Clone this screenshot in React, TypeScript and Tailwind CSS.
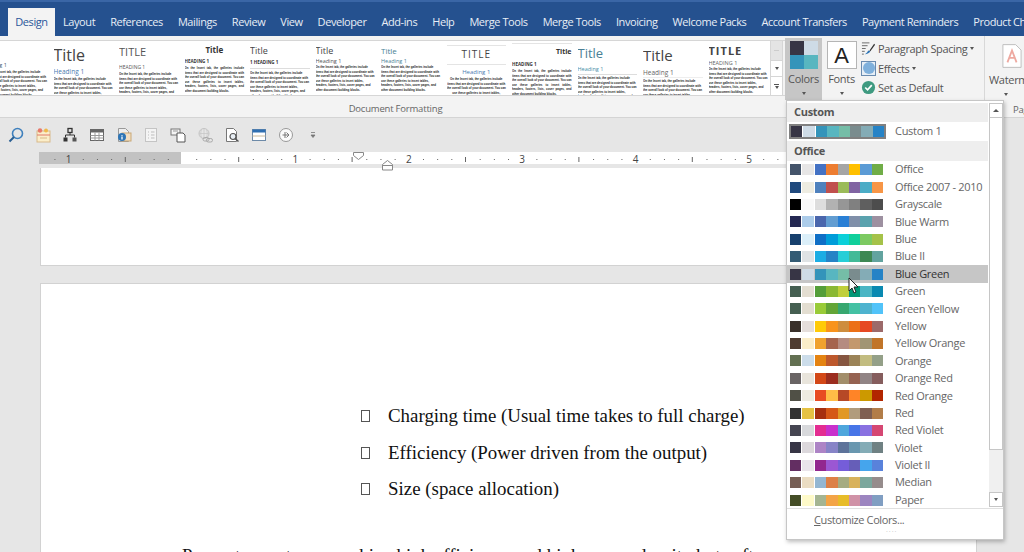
const tabs = ["Layout", "References", "Mailings", "Review", "View", "Developer", "Add-ins", "Help", "Merge Tools", "Merge Tools", "Invoicing", "Welcome Packs", "Account Transfers", "Payment Reminders", "Product Change"];

const bodyText =
  "On the Insert tab, the galleries include items that are designed to coordinate with the overall look of your document. You can use these galleries to insert tables, headers, footers, lists, cover pages, and other document building blocks.";

const gallery = [
  { title: "", titleCls: "h-[19px]", heading: "Heading 1", headCls: "-ml-[7px] text-[5.5px] text-[#44546a]", bodyCls: "mt-[1px]" },
  { title: "Title", titleCls: "text-[16px] leading-[24px] text-[#444]", heading: "Heading 1", headCls: "mt-[1px] text-[6.5px] text-[#4a7ab0]", bodyCls: "mt-[2px]" },
  { title: "TITLE", titleCls: "text-[11px] leading-[18px] text-[#555]", heading: "HEADING 1", headCls: "mt-[3px] text-[5px] text-[#555]", bodyCls: "mt-[1px]" },
  { title: "Title", titleCls: "text-[8px] leading-[14px] font-bold text-center text-[#333]", heading: "HEADING 1", headCls: "mt-[1px] text-[4.5px] font-bold text-[#333]", bodyCls: "mt-[1px] text-justify" },
  { title: "Title", titleCls: "text-[9px] leading-[15px] text-[#444]", heading: "1   HEADING 1", headCls: "mt-[1px] pb-[2px] text-[4.5px] font-bold text-[#333] border-b border-[#ddd]", bodyCls: "mt-[2px]" },
  { title: "Title", titleCls: "text-[9px] leading-[15px] text-[#444]", heading: "Heading 1", headCls: "text-[5.5px] text-[#555]", bodyCls: "mt-[0px]" },
  { title: "Title", titleCls: "text-[8px] leading-[15px] text-[#4a7f95]", heading: "Heading 1", headCls: "text-[5.5px] text-[#4a7f95]", bodyCls: "mt-[0px]" },
  { title: "TITLE", titleCls: "mt-[2px] pb-[2px] text-[10px] leading-[16px] tracking-[1px] text-center text-[#444] border-t border-b border-[#e4e4e4]", heading: "Heading 1", headCls: "mt-[4px] text-[6px] text-center text-[#4a7ab0]", bodyCls: "mt-[1px] text-center" },
  { title: "Title", titleCls: "text-[7px] leading-[16px] font-bold text-right text-[#333] border-t border-[#e4e4e4]", heading: "HEADING 1", headCls: "mt-[1px] text-[4.5px] font-bold text-[#333]", bodyCls: "mt-[1px] text-justify" },
  { title: "Title", titleCls: "text-[13px] leading-[20px] text-[#4a7f95]", heading: "Heading 1", headCls: "mt-[3px] pb-[1px] text-[5.5px] text-[#4a8fa8] border-b border-[#ddd]", bodyCls: "mt-[1px]" },
  { title: "Title", titleCls: "text-[15px] leading-[24px] text-[#444]", heading: "Heading 1", headCls: "mt-[2px] pb-[1px] text-[6.5px] text-[#666] border-b border-[#eee]", bodyCls: "mt-[1px]" },
  { title: "TITLE", titleCls: "text-[11px] leading-[16px] tracking-[1px] font-bold text-[#444]", heading: "HEADING 1", headCls: "mt-[1px] text-[5.5px] text-[#666]", bodyCls: "mt-[0px]" },
];

const colorRows = [
  { name: "Office", c: ["bg-[#44546a]", "bg-[#e7e6e6]", "bg-[#4472c4]", "bg-[#ed7d31]", "bg-[#a5a5a5]", "bg-[#ffc000]", "bg-[#5b9bd5]", "bg-[#70ad47]"] },
  { name: "Office 2007 - 2010", c: ["bg-[#1f497d]", "bg-[#eeece1]", "bg-[#4f81bd]", "bg-[#c0504d]", "bg-[#9bbb59]", "bg-[#8064a2]", "bg-[#4bacc6]", "bg-[#f79646]"] },
  { name: "Grayscale", c: ["bg-[#000000]", "bg-[#f8f8f8]", "bg-[#dddddd]", "bg-[#b2b2b2]", "bg-[#969696]", "bg-[#808080]", "bg-[#5f5f5f]", "bg-[#4d4d4d]"] },
  { name: "Blue Warm", c: ["bg-[#242852]", "bg-[#acccea]", "bg-[#4a66ac]", "bg-[#629dd1]", "bg-[#297fd5]", "bg-[#7f8fa9]", "bg-[#5aa2ae]", "bg-[#9d90a0]"] },
  { name: "Blue", c: ["bg-[#17406d]", "bg-[#dbeff9]", "bg-[#0f6fc6]", "bg-[#009dd9]", "bg-[#0bd0d9]", "bg-[#10cf9b]", "bg-[#7cca62]", "bg-[#a5c249]"] },
  { name: "Blue II", c: ["bg-[#335b74]", "bg-[#dfe3e5]", "bg-[#1cade4]", "bg-[#2683c6]", "bg-[#27ced7]", "bg-[#42ba97]", "bg-[#3e8853]", "bg-[#62a39f]"] },
  { name: "Blue Green", hover: true, c: ["bg-[#373545]", "bg-[#cedbe6]", "bg-[#3494ba]", "bg-[#58b6c0]", "bg-[#75bda7]", "bg-[#7a8c8e]", "bg-[#84acb6]", "bg-[#2683c6]"] },
  { name: "Green", c: ["bg-[#455f51]", "bg-[#e3ded1]", "bg-[#549e39]", "bg-[#8ab833]", "bg-[#c0cf3a]", "bg-[#029676]", "bg-[#4ab5c4]", "bg-[#0989b1]"] },
  { name: "Green Yellow", c: ["bg-[#455f51]", "bg-[#e3ded1]", "bg-[#99cb38]", "bg-[#63a537]", "bg-[#37a76f]", "bg-[#44c1a3]", "bg-[#4eb3cf]", "bg-[#51c3f9]"] },
  { name: "Yellow", c: ["bg-[#39302a]", "bg-[#e5dedb]", "bg-[#ffca08]", "bg-[#f8931d]", "bg-[#ce8d3e]", "bg-[#ec7016]", "bg-[#e64823]", "bg-[#9c6a6a]"] },
  { name: "Yellow Orange", c: ["bg-[#4e3b30]", "bg-[#fbeec9]", "bg-[#f0a22e]", "bg-[#a5644e]", "bg-[#b58b80]", "bg-[#c3986d]", "bg-[#a19574]", "bg-[#c17529]"] },
  { name: "Orange", c: ["bg-[#637052]", "bg-[#ccddea]", "bg-[#e48312]", "bg-[#bd582c]", "bg-[#865640]", "bg-[#9b8357]", "bg-[#c2bc80]", "bg-[#94a088]"] },
  { name: "Orange Red", c: ["bg-[#696464]", "bg-[#e9e5dc]", "bg-[#d34817]", "bg-[#9b2d1f]", "bg-[#a28e6a]", "bg-[#956251]", "bg-[#918485]", "bg-[#855d5d]"] },
  { name: "Red Orange", c: ["bg-[#505046]", "bg-[#eeece1]", "bg-[#e84c22]", "bg-[#ffbd47]", "bg-[#b64926]", "bg-[#ff8427]", "bg-[#cc9900]", "bg-[#b22600]"] },
  { name: "Red", c: ["bg-[#323232]", "bg-[#e5c243]", "bg-[#a5300f]", "bg-[#d55816]", "bg-[#e19825]", "bg-[#b19c7d]", "bg-[#7f5f52]", "bg-[#b27d49]"] },
  { name: "Red Violet", c: ["bg-[#454551]", "bg-[#d8d9dc]", "bg-[#e32d91]", "bg-[#c830cc]", "bg-[#4ea6dc]", "bg-[#4775e7]", "bg-[#8971e1]", "bg-[#d54773]"] },
  { name: "Violet", c: ["bg-[#373545]", "bg-[#dcd8dc]", "bg-[#ad84c6]", "bg-[#8784c7]", "bg-[#5d739a]", "bg-[#6997af]", "bg-[#84acb6]", "bg-[#6f8183]"] },
  { name: "Violet II", c: ["bg-[#632e62]", "bg-[#eae5eb]", "bg-[#92278f]", "bg-[#9b57d3]", "bg-[#755dd9]", "bg-[#665eb8]", "bg-[#45a5ed]", "bg-[#5982db]"] },
  { name: "Median", c: ["bg-[#775f55]", "bg-[#ebddc3]", "bg-[#94b6d2]", "bg-[#dd8047]", "bg-[#a5ab81]", "bg-[#d8b25c]", "bg-[#7ba79d]", "bg-[#968c8c]"] },
  { name: "Paper", c: ["bg-[#444d26]", "bg-[#fefac9]", "bg-[#a5b592]", "bg-[#f3a447]", "bg-[#e7bc29]", "bg-[#d092a7]", "bg-[#9c85c0]", "bg-[#809ec2]"] },
];

const customRow = colorRows[6].c;

function Swatches({ colors }: { colors: string[] }) {
  return (
    <div className="flex h-[11px] w-[93px] shrink-0">
      {colors.map((c, i) => (
        <div key={i} className={`${c} h-full flex-1 ${i < 2 ? "mr-[1px]" : ""}`} />
      ))}
    </div>
  );
}

function Caret() {
  return <span className="inline-block h-0 w-0 border-x-[2.5px] border-t-[3px] border-x-transparent border-t-[#555]" />;
}

const toolbarIcons = [
  <svg key="a" viewBox="0 0 16 16" className="h-4 w-4"><circle cx="9.5" cy="6.5" r="5" fill="none" stroke="#3f80bd" strokeWidth="1.6" /><path d="M6 10 1.5 14.5" stroke="#2a5f93" strokeWidth="2" /></svg>,
  <svg key="b" viewBox="0 0 16 16" className="h-4 w-4"><rect x="2" y="4" width="13" height="11" fill="#fbeec9" stroke="#d8b98a" /><path d="M2 8h13" stroke="#e07a6a" /><circle cx="5" cy="3.5" r="2.2" fill="#e8796a" /><circle cx="11" cy="3.5" r="2" fill="#f0b84a" /><path d="M5 11h7" stroke="#d8b98a" /></svg>,
  <svg key="c" viewBox="0 0 16 16" className="h-4 w-4"><rect x="6" y="1.5" width="4" height="4" fill="none" stroke="#333" strokeWidth="1.3" /><rect x="1.5" y="10.5" width="4" height="4" fill="#333" /><rect x="10.5" y="10.5" width="4" height="4" fill="#555" /><path d="M8 5.5V8M3.5 10.5V8h9v2.5" fill="none" stroke="#333" /></svg>,
  <svg key="d" viewBox="0 0 16 16" className="h-4 w-4"><rect x="1.5" y="2.5" width="13" height="11" fill="#fff" stroke="#666" /><rect x="1.5" y="2.5" width="13" height="3" fill="#666" /><path d="M1.5 8.5h13M1.5 11h13M6 5.5v8M10 5.5v8" stroke="#999" /></svg>,
  <svg key="e" viewBox="0 0 16 16" className="h-4 w-4"><path d="M2.5 1.5h7l3 3v10h-10z" fill="#eee" stroke="#999" /><rect x="6" y="6" width="9" height="8" fill="#f2ddc0" stroke="#c9a877" /><circle cx="6" cy="10" r="4" fill="#2e75b6" /><path d="M6 8v.8M6 9.6v3" stroke="#fff" strokeWidth="1.3" /></svg>,
  <svg key="f" viewBox="0 0 16 16" className="h-4 w-4"><rect x="2.5" y="1.5" width="11" height="13" fill="#f4f4f4" stroke="#c4c4c4" /><path d="M5 5h1M8 5h3.5M5 8h1M8 8h3.5M5 11h1M8 11h3.5" stroke="#bdbdbd" /></svg>,
  <svg key="g" viewBox="0 0 16 16" className="h-4 w-4"><rect x="1" y="2" width="9" height="6" fill="#f4f4f4" stroke="#777" /><path d="M7 6h6l2 2v7H7z" fill="#fff" stroke="#555" /><path d="M3 4h5" stroke="#999" /></svg>,
  <svg key="h" viewBox="0 0 16 16" className="h-4 w-4"><circle cx="7" cy="6.5" r="5" fill="none" stroke="#c2c2c2" /><path d="M2 6.5h10M7 1.5v10M4.5 2.5c-1 3-1 5 0 8M9.5 2.5c1 3 1 5 0 8" fill="none" stroke="#c8c8c8" strokeWidth=".8" /><rect x="6" y="10.5" width="6" height="3.5" rx="1.7" fill="none" stroke="#aaa" /><rect x="9.5" y="11.5" width="6" height="3.5" rx="1.7" fill="none" stroke="#aaa" /></svg>,
  <svg key="i" viewBox="0 0 16 16" className="h-4 w-4"><path d="M2.5 1.5h7l3 3v10h-10z" fill="#fff" stroke="#777" /><circle cx="9" cy="9.5" r="3" fill="#e8eef4" stroke="#555" strokeWidth="1.2" /><path d="m11 11.5 3.5 3" stroke="#555" strokeWidth="1.6" /></svg>,
  <svg key="j" viewBox="0 0 16 16" className="h-4 w-4"><rect x="1.5" y="2.5" width="13" height="11" fill="#fff" stroke="#6d8aa8" /><rect x="1.5" y="2.5" width="13" height="3" fill="#2f6fb2" /><path d="M1.5 9h13" stroke="#c9b99a" /></svg>,
  <svg key="k" viewBox="0 0 16 16" className="h-4 w-4"><circle cx="8" cy="8" r="6.5" fill="#fafafa" stroke="#999" /><path d="M4.5 8h6M8.5 5.5 11 8l-2.5 2.5M7 5v6" fill="none" stroke="#777" /></svg>,
  <svg key="l" viewBox="0 0 16 16" className="h-4 w-4"><path d="M6 5.5h4M6 8l2 2.5L10 8z" fill="#777" stroke="#777" strokeWidth=".8" /></svg>,
];

function GalleryItem({ item }: { item: (typeof gallery)[number] }) {
  return (
    <div className="h-full w-[65.5px] shrink-0 overflow-hidden py-[2px] pr-[6px] font-['Open_Sans',sans-serif]">
      <div className={item.titleCls}>{item.title}</div>
      <div className={`${item.headCls} leading-[7px] whitespace-nowrap`}>{item.heading}</div>
      <p className={`${item.bodyCls} font-['Liberation_Sans',sans-serif] text-[2.9px] leading-[4.6px] font-bold text-[#222]`}>{bodyText}</p>
    </div>
  );
}

function Ruler() {
  const ticks = [];
  for (let i = -10; i <= 55; i++) {
    const x = 182 + i * 14.175;
    if (x < 42) continue;
    if (i % 8 === 0) continue;
    if (i % 4 === 0) ticks.push(<path key={i} d={`M${x} 5v5`} stroke="#666" />);
    else ticks.push(<rect key={i} x={x} y="7" width="1" height="1" fill="#666" />);
  }
  const nums: [number, string][] = [[68.6, "1"], [295.4, "1"], [408.8, "2"], [522.2, "3"], [635.6, "4"], [749, "5"]];
  return (
    <svg viewBox="0 0 938 20" className="h-[20px] w-[938px] overflow-visible">
      {ticks}
      {nums.map(([x, n]) => (
        <text key={x} x={x} y="11" textAnchor="middle" fontSize="10" fontFamily="Open Sans, sans-serif" fill="#444">{n}</text>
      ))}
      <path d="M353.5 0.5h10v3l-5 4-5-4z" fill="#fff" stroke="#888" />
      <path d="M382.5 12.5l5-4 5 4v5.5h-10z" fill="#fff" stroke="#888" />
      <path d="M382.5 13.5h10" stroke="#888" />
    </svg>
  );
}

export default function App() {
  return (
    <div className="relative flex h-[552px] w-[1024px] flex-col overflow-hidden bg-[#e6e6e6] font-['Open_Sans',sans-serif]">
      {/* tabs */}
      <div className="flex h-[36px] shrink-0 items-end overflow-hidden border-t-2 border-[#3a66a6] bg-[#25518f] pl-[8px] text-[11px] tracking-[-0.42px] whitespace-nowrap text-[#e8eef6]">
        <div className="flex h-[28px] w-[47px] shrink-0 items-center justify-center bg-[#f3f3f3] text-[#2b579a]">Design</div>
        <div className="ml-[8px] flex h-[28px] shrink-0 items-center gap-[15px]">
          {tabs.map((t, i) => (
            <span key={i}>{t}</span>
          ))}
        </div>
      </div>

      {/* ribbon */}
      <div className="flex h-[82px] shrink-0 border-b border-[#d4d4d4] bg-[#f3f3f3] tracking-[-0.3px]">
        <div className="flex w-[785px] shrink-0 flex-col">
          <div className="mt-[4px] flex h-[56px] border-y border-[#d6d6d6] tracking-normal">
            <div className="flex w-[770px] overflow-hidden bg-white">
              <div className="-ml-[12px] flex h-full">
                {gallery.map((g, i) => (
                  <GalleryItem key={i} item={g} />
                ))}
              </div>
            </div>
            <div className="flex w-[13px] flex-col border-x border-[#d6d6d6]">
              <div className="flex h-[19px] items-center justify-center bg-[#e4e4e4]"><span className="h-px w-[5px] bg-[#ccc]" /></div>
              <div className="flex h-[17px] items-center justify-center border-y border-[#d6d6d6] bg-white"><Caret /></div>
              <div className="flex flex-1 flex-col items-center justify-center gap-[1px] bg-white"><span className="h-px w-[5px] bg-[#555]" /><Caret /></div>
            </div>
          </div>
          <div className="flex flex-1 items-center justify-center pt-[6px] pl-[6px] text-[9.5px] tracking-[-0.2px] text-[#666]">Document Formatting</div>
        </div>

        <div className="mt-[2px] flex h-[62px] w-[37px] shrink-0 flex-col items-center bg-[#c6c6c6] pt-[3px]">
          <div className="grid h-[28px] w-[28px] grid-cols-2">
            <span className="bg-[#373545]" />
            <span className="bg-[#cedbe6]" />
            <span className="bg-[#3494ba]" />
            <span className="bg-[#58b6c0]" />
          </div>
          <span className="mt-[2px] text-[11px] leading-[16px] text-[#555]">Colors</span>
          <span className="mt-[5px] flex"><Caret /></span>
        </div>

        <div className="mt-[2px] ml-[2px] flex h-[62px] w-[35px] shrink-0 flex-col items-center pt-[3px]">
          <div className="flex h-[28px] w-[30px] items-center justify-center border border-[#b5b5b5] bg-white font-['Liberation_Sans',sans-serif] text-[22px] text-[#222]">A</div>
          <span className="mt-[2px] text-[11px] leading-[16px] text-[#555]">Fonts</span>
          <span className="mt-[5px] flex"><Caret /></span>
        </div>

        <div className="ml-[2px] flex w-[122px] shrink-0 flex-col pt-[3px] text-[11px] leading-[19.5px] tracking-[-0.38px] text-[#555]">
          <div className="flex items-center gap-[2px]">
            <svg viewBox="0 0 16 16" className="h-[15px] w-[15px]"><path d="M1 2h8M1 5h6M1 8h4M1 11h3M1 14h2" stroke="#666" /><path d="M4 14c2-1 3-3 4-4l2 1c-1 2-3 3-6 3z" fill="#2e75b6" /><path d="m9 10 5-7 1 1-5 7z" fill="#333" /></svg>
            <span>Paragraph Spacing</span>
            <span className="ml-[1px] flex"><Caret /></span>
          </div>
          <div className="flex items-center gap-[2px]">
            <span className="flex h-[15px] w-[15px] items-center justify-center border border-[#6a8bb0] bg-[#e6eef6]"><span className="h-[12px] w-[12px] rounded-full bg-[#7fb0dc]" /></span>
            <span>Effects</span>
            <span className="ml-[1px] flex"><Caret /></span>
          </div>
          <div className="flex items-center gap-[2px]">
            <svg viewBox="0 0 16 16" className="h-[15px] w-[15px]"><circle cx="8" cy="8" r="7" fill="#3f9a80" /><path d="m4.5 8 2.5 2.5 4.5-5" fill="none" stroke="#fff" strokeWidth="1.8" /></svg>
            <span>Set as Default</span>
          </div>
        </div>

        <div className="ml-[1px] h-[64px] w-px shrink-0 bg-[#d8d8d8]" />

        <div className="flex w-[40px] shrink-0 flex-col overflow-hidden pt-[7px] pl-[4px] whitespace-nowrap">
          <svg viewBox="0 0 22 26" className="ml-[13px] h-[26px] w-[20px] shrink-0"><path d="M1 .5h14l6 6v19H1z" fill="#fff" stroke="#bbb" /><path d="M6 20l5-13 5 13M8 15h6" fill="none" stroke="#eea9a0" strokeWidth="2" /></svg>
          <span className="mt-[3px] text-[11px] leading-[16px] text-[#555]">Watermark</span>
          <span className="mt-[5px] ml-[15px] flex"><Caret /></span>
          <span className="mt-[8px] ml-[24px] text-[9.5px] leading-[12px] text-[#666]">Page</span>
        </div>
      </div>

      {/* quick access */}
      <div className="flex h-[34px] shrink-0 items-center pl-[2px]">
        {toolbarIcons.map((icon, i) => (
          <div key={i} className="flex w-[27px] justify-center">{icon}</div>
        ))}
      </div>

      {/* ruler */}
      <div className="ml-[39px] flex h-[12px] w-[938px] shrink-0 bg-white">
        <div className="h-full w-[142px] bg-[#c2c2c2]" />
        <div className="absolute -ml-[39px]">
          <Ruler />
        </div>
      </div>

      {/* document */}
      <div className="mt-[4px] flex min-h-0 flex-1 flex-col gap-[17px] pr-[47px] pl-[40px]">
        <div className="h-[98px] shrink-0 border-x border-b border-[#d2d2d2] bg-white" />
        <div className="flex-1 border border-b-0 border-[#d2d2d2] bg-white pt-[114px] pl-[320px] font-['Liberation_Serif',serif] text-[18.9px] leading-[36.5px] text-[#111]">
          {["Charging time (Usual time takes to full charge)", "Efficiency (Power driven from the output)", "Size (space allocation)"].map((t) => (
            <div key={t} className="flex items-center">
              <span className="h-[12px] w-[9px] border border-[#555]" />
              <span className="ml-[18px]">{t}</span>
            </div>
          ))}
          <p className="mt-[30px] -ml-[179px] whitespace-nowrap">Power to meet any machine high efficiency and high power density but soft</p>
        </div>
      </div>

      {/* colors menu */}
      <div className="absolute top-[100px] left-[786px] flex h-[440px] w-[218px] flex-col border border-[#c6c6c6] bg-white tracking-[-0.3px] shadow-[1px_2px_4px_rgba(0,0,0,0.25)]">
        <div className="flex min-h-0 flex-1 pt-[2px]">
          <div className="w-[201px] shrink-0 text-[11px] text-[#666]">
            <div className="flex h-[19px] items-center bg-[#eeeeee] pl-[7px] text-[11px] font-bold text-[#555]">Custom</div>
            <div className="flex h-[19px] items-center">
              <div className="ml-[2px] border-2 border-[#808080]"><Swatches colors={customRow} /></div>
              <span className="ml-[9px]">Custom 1</span>
            </div>
            <div className="flex h-[20px] items-center bg-[#eeeeee] pl-[7px] text-[11px] font-bold text-[#555]">Office</div>
            {colorRows.map((row) => (
              <div key={row.name} className={`flex h-[17.4px] items-center pl-[3px] ${row.hover ? "bg-[#c6c6c6] text-[#333]" : ""}`}>
                <Swatches colors={row.c} />
                <span className="ml-[12px] whitespace-nowrap">{row.name}</span>
              </div>
            ))}
          </div>
          <div className="ml-[1px] flex h-[404px] w-[14px] flex-col bg-[#f0f0f0]">
            <div className="flex h-[15px] items-center justify-center border border-[#c6c6c6] bg-white"><span className="h-0 w-0 border-x-[3px] border-b-[3px] border-x-transparent border-b-[#555]" /></div>
            <div className="h-[332px] border-x border-b border-[#c6c6c6] bg-white" />
            <div className="flex-1" />
            <div className="flex h-[15px] items-center justify-center border border-[#c6c6c6] bg-white"><Caret /></div>
          </div>
        </div>
        <div className="flex h-[31px] shrink-0 flex-col border-t border-[#e0e0e0]">
          <span className="mt-[3px] ml-[27px] text-[11px] leading-[16px] tracking-[-0.4px] text-[#666]"><span className="underline">C</span>ustomize Colors...</span>
          <span className="mt-[1px] ml-[99px] text-[7px] leading-[6px] tracking-[1px] text-[#bbb]">····</span>
        </div>
      </div>

      {/* mouse pointer */}
      <svg viewBox="0 0 11 17" className="absolute top-[277px] left-[848px] h-[17px] w-[11px]"><path d="M1 1v13l3-3 2 5 2-1-2-5h4z" fill="#fff" stroke="#222" /></svg>
    </div>
  );
}
